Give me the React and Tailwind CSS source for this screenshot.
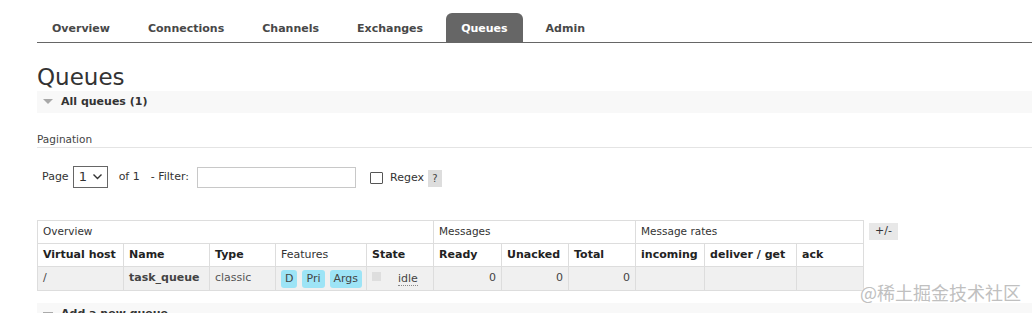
import React from "react";

const F = { fontFamily: '"DejaVu Sans", Verdana, sans-serif' };

function Tab({ label, active }) {
  return (
    <div
      className={
        "h-[29px] pt-[3px] px-[15px] flex items-center text-[11px] font-bold rounded-t-[6px] " +
        (active ? "bg-[#666666] text-white" : "text-[#484848]")
      }
    >
      {label}
    </div>
  );
}

function Badge({ children }) {
  return (
    <span className="inline-block bg-[#9de4f6] text-[#444] rounded-[3px] px-[4px] leading-[18px] mr-[5px]">
      {children}
    </span>
  );
}

export default function App() {
  const th = "border border-[#dddddd] text-left font-bold px-[5px] h-[23px] text-[11px] text-[#222]";
  const td = "border border-[#dddddd] px-[5px] h-[24px] text-[11px] text-[#444]";
  const gh = "border border-[#dddddd] text-left font-normal px-[5px] h-[23px] text-[10.5px] text-[#333]";
  return (
    <div className="w-[1032px] h-[313px] overflow-hidden bg-white relative" style={F}>
      <div className="pl-[37px] pt-[13px]">
        {/* nav */}
        <div className="flex gap-[8px] border-b border-[#666666]">
          {["Overview", "Connections", "Channels", "Exchanges", "Queues", "Admin"].map((t) => (
            <Tab key={t} label={t} active={t === "Queues"} />
          ))}
        </div>

        <h1 className="text-[23px] leading-[26px] text-[#333] mt-[21px] font-normal">Queues</h1>

        <div className="mt-[1px] h-[22px] bg-[#f8f8f8] flex items-center">
          <svg width="10" height="6" className="ml-[6px]" viewBox="0 0 10 6">
            <path d="M0 0 L10 0 L5 5 Z" fill="#a8a8a8" />
          </svg>
          <span className="ml-[8px] text-[11px] font-bold text-[#333]">All queues (1)</span>
        </div>

        <div className="mt-[20px] text-[10.5px] leading-[13px] text-[#444] pb-[1px] border-b border-[#e4e4e4]">Pagination</div>

        <div className="mt-[18px] flex items-center text-[11px] text-[#333] h-[22px]">
          <span className="ml-[5px]">Page</span>
          <div className="ml-[4px] w-[35px] h-[22px] border border-[#666] flex items-center justify-between px-[5px] text-[13px]">
            <span>1</span>
            <svg width="9" height="6" viewBox="0 0 9 6"><path d="M0.5 0.5 L4.5 4.5 L8.5 0.5" stroke="#333" strokeWidth="1.4" fill="none" /></svg>
          </div>
          <span className="ml-[11px]">of 1</span>
          <span className="ml-[11px]">- Filter:</span>
          <div className="ml-[8px] w-[159px] h-[21px] border border-[#c8c8c8]" />
          <div className="ml-[14px] w-[13px] h-[12px] border border-[#555] rounded-[1px] mt-[2px]" />
          <span className="ml-[7px] mt-[3px]">Regex</span>
          <span className="ml-[4px] mt-[3px] bg-[#dddddd] w-[14px] h-[17px] flex items-center justify-center text-[10px] text-[#444]">?</span>
        </div>

        <div className="mt-[32px] flex items-start">
          <table className="border-collapse w-[826px] table-fixed">
            <colgroup>
              <col className="w-[86px]" />
              <col className="w-[86px]" />
              <col className="w-[66px]" />
              <col className="w-[91px]" />
              <col className="w-[67px]" />
              <col className="w-[68px]" />
              <col className="w-[67px]" />
              <col className="w-[67px]" />
              <col className="w-[69px]" />
              <col className="w-[92px]" />
              <col className="w-[67px]" />
            </colgroup>
            <thead>
              <tr>
                <th colSpan={5} className={gh}>Overview</th>
                <th colSpan={3} className={gh}>Messages</th>
                <th colSpan={3} className={gh}>Message rates</th>
              </tr>
              <tr>
                <th className={th + " whitespace-nowrap"}>Virtual host</th>
                <th className={th}>Name</th>
                <th className={th}>Type</th>
                <th className={th + " font-normal text-[#333]"}>Features</th>
                <th className={th}>State</th>
                <th className={th}>Ready</th>
                <th className={th}>Unacked</th>
                <th className={th}>Total</th>
                <th className={th}>incoming</th>
                <th className={th + " whitespace-nowrap"}>deliver / get</th>
                <th className={th}>ack</th>
              </tr>
            </thead>
            <tbody>
              <tr className="bg-[#f0f0f0]">
                <td className={td}>/</td>
                <td className={td + " font-bold text-[#222]"}>task_queue</td>
                <td className={td + " text-[#555]"}>classic</td>
                <td className={td + " text-[10.5px] whitespace-nowrap"}>
                  <Badge>D</Badge>
                  <Badge>Pri</Badge>
                  <Badge>Args</Badge>
                </td>
                <td className={td}>
                  <div className="flex items-center">
                    <span className="w-[9px] h-[9px] bg-[#dedede] mb-[4px]" />
                    <span className="ml-[17px] border-b border-dotted border-[#888] leading-[13px]">idle</span>
                  </div>
                </td>
                <td className={td + " text-right"}>0</td>
                <td className={td + " text-right"}>0</td>
                <td className={td + " text-right"}>0</td>
                <td className={td}></td>
                <td className={td}></td>
                <td className={td}></td>
              </tr>
            </tbody>
          </table>
          <span className="ml-[5px] mt-[3px] bg-[#e8e8e8] px-[6px] h-[17px] flex items-center text-[11px] text-[#333]">+/-</span>
        </div>

        <div className="mt-[12px] h-[22px] bg-[#f8f8f8] flex items-center">
          <span className="ml-[6px] w-[10px] h-[4px] bg-[#aaa]" />
          <span className="ml-[8px] text-[11px] font-bold text-[#333]">Add a new queue</span>
        </div>
      </div>

      <div
        className="absolute left-[860px] top-[279px] text-[18px] text-[#c0c0c0] whitespace-nowrap"
        style={{ fontFamily: '"Noto Sans CJK SC", "DejaVu Sans", sans-serif', textShadow: "0 0 2px #fff" }}
      >
        @稀土掘金技术社区
      </div>
    </div>
  );
}
